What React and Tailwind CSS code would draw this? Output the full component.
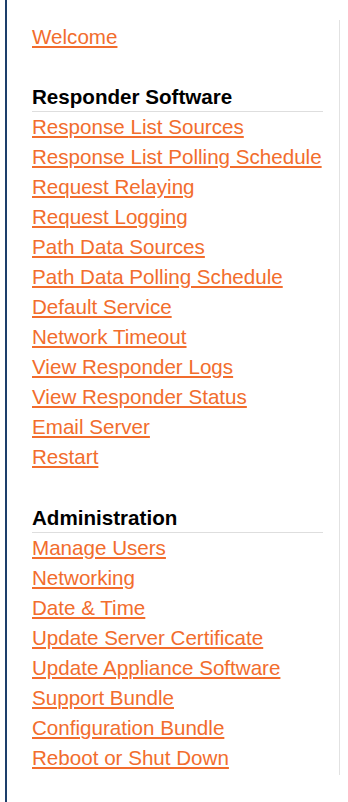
const RESPONDER_LINKS = [
  "Response List Sources",
  "Response List Polling Schedule",
  "Request Relaying",
  "Request Logging",
  "Path Data Sources",
  "Path Data Polling Schedule",
  "Default Service",
  "Network Timeout",
  "View Responder Logs",
  "View Responder Status",
  "Email Server",
  "Restart",
];

const ADMIN_LINKS = [
  "Manage Users",
  "Networking",
  "Date & Time",
  "Update Server Certificate",
  "Update Appliance Software",
  "Support Bundle",
  "Configuration Bundle",
  "Reboot or Shut Down",
];

function NavLink({ children }) {
  return (
    <a
      href="#"
      className="block text-[20.6px] leading-[30px] text-[#f26d2d] underline decoration-[#f26d2d] underline-offset-[2px]"
    >
      {children}
    </a>
  );
}

function Section({ title, links, className }) {
  return (
    <div className={className}>
      <div className="text-[20.6px] leading-[24px] font-bold text-black pb-[2px] border-b border-[#dedede]">
        {title}
      </div>
      {links.map((l) => (
        <NavLink key={l}>{l}</NavLink>
      ))}
    </div>
  );
}

export default function App() {
  return (
    <div
      className="h-[802px] w-[348px] bg-white flex overflow-hidden"
      style={{ fontFamily: '"Liberation Sans", Arial, sans-serif' }}
    >
      <div className="ml-[5px] border-l-2 border-[#1d3f6b]" />
      <div className="mt-[20px] h-[755px] w-[333px] border-r border-[#e2e2e2] pt-[2px] pl-[25px] pr-[16px]">
        <NavLink>Welcome</NavLink>
        <Section title="Responder Software" links={RESPONDER_LINKS} className="mt-[33px]" />
        <Section title="Administration" links={ADMIN_LINKS} className="mt-[34px]" />
      </div>
    </div>
  );
}
